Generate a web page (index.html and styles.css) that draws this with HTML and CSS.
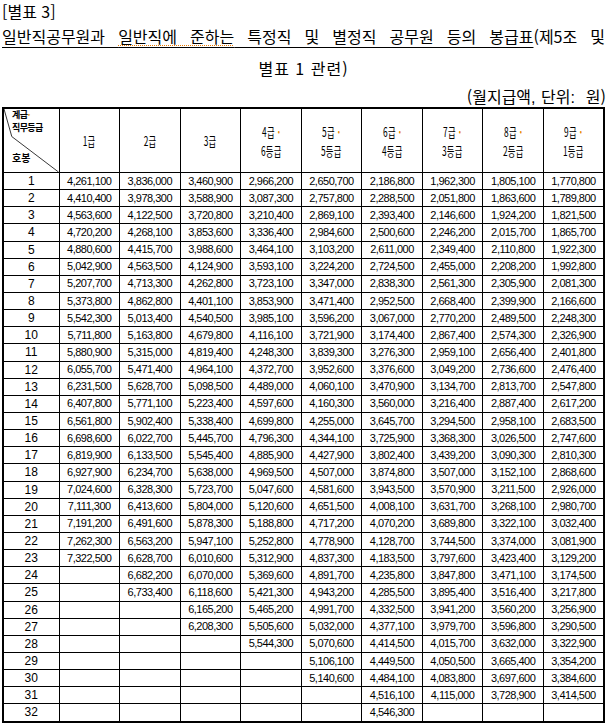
FILE: index.html
```html
<!DOCTYPE html>
<html lang="ko">
<head>
<meta charset="utf-8">
<link rel="stylesheet" href="styles.css">
</head>
<body>
<div class="page">
  <div class="tag">[별표 3]</div>
  <div class="title1"><span class="u">일반직공무원과 <span class="sp">일반직에 준하는</span> 특정직 및 별정직 공무원 등의 봉급표</span>(제5조 및</div>
  <div class="title2">별표 1 관련)</div>
  <div class="unit">(월지급액<span class="pn">,</span> 단위<span class="pn">:</span>&nbsp; 원)</div>
</div>
<table class="pay">
  <colgroup><col class="c0"><col><col><col><col><col><col><col><col><col></colgroup>
  <thead>
    <tr class="head">
      <th class="diag">
        <svg class="diag-line" viewBox="0 0 56 64" preserveAspectRatio="none"><polyline points="0,0 8,28 56,64" fill="none" stroke="#333" stroke-width="1"/></svg>
        <div class="diag-top"><span>계급<span class="dot">·</span></span><span>직무등급</span></div>
        <div class="diag-bot">호봉</div>
      </th>
      <th><span class="h">1급</span></th>
      <th><span class="h">2급</span></th>
      <th><span class="h">3급</span></th>
      <th><span class="h">4급 <span class="dot">·</span><br>6등급</span></th>
      <th><span class="h">5급 <span class="dot">·</span><br>5등급</span></th>
      <th><span class="h">6급 <span class="dot">·</span><br>4등급</span></th>
      <th><span class="h">7급 <span class="dot">·</span><br>3등급</span></th>
      <th><span class="h">8급 <span class="dot">·</span><br>2등급</span></th>
      <th><span class="h">9급 <span class="dot">·</span><br>1등급</span></th>
    </tr>
  </thead>
  <tbody>
    <tr><td>1</td><td>4,261,100</td><td>3,836,000</td><td>3,460,900</td><td>2,966,200</td><td>2,650,700</td><td>2,186,800</td><td>1,962,300</td><td>1,805,100</td><td>1,770,800</td></tr>
    <tr><td>2</td><td>4,410,400</td><td>3,978,300</td><td>3,588,900</td><td>3,087,300</td><td>2,757,800</td><td>2,288,500</td><td>2,051,800</td><td>1,863,600</td><td>1,789,800</td></tr>
    <tr><td>3</td><td>4,563,600</td><td>4,122,500</td><td>3,720,800</td><td>3,210,400</td><td>2,869,100</td><td>2,393,400</td><td>2,146,600</td><td>1,924,200</td><td>1,821,500</td></tr>
    <tr><td>4</td><td>4,720,200</td><td>4,268,100</td><td>3,853,600</td><td>3,336,400</td><td>2,984,600</td><td>2,500,600</td><td>2,246,200</td><td>2,015,700</td><td>1,865,700</td></tr>
    <tr><td>5</td><td>4,880,600</td><td>4,415,700</td><td>3,988,600</td><td>3,464,100</td><td>3,103,200</td><td>2,611,000</td><td>2,349,400</td><td>2,110,800</td><td>1,922,300</td></tr>
    <tr><td>6</td><td>5,042,900</td><td>4,563,500</td><td>4,124,900</td><td>3,593,100</td><td>3,224,200</td><td>2,724,500</td><td>2,455,000</td><td>2,208,200</td><td>1,992,800</td></tr>
    <tr><td>7</td><td>5,207,700</td><td>4,713,300</td><td>4,262,800</td><td>3,723,100</td><td>3,347,000</td><td>2,838,300</td><td>2,561,300</td><td>2,305,900</td><td>2,081,300</td></tr>
    <tr><td>8</td><td>5,373,800</td><td>4,862,800</td><td>4,401,100</td><td>3,853,900</td><td>3,471,400</td><td>2,952,500</td><td>2,668,400</td><td>2,399,900</td><td>2,166,600</td></tr>
    <tr><td>9</td><td>5,542,300</td><td>5,013,400</td><td>4,540,500</td><td>3,985,100</td><td>3,596,200</td><td>3,067,000</td><td>2,770,200</td><td>2,489,500</td><td>2,248,300</td></tr>
    <tr><td>10</td><td>5,711,800</td><td>5,163,800</td><td>4,679,800</td><td>4,116,100</td><td>3,721,900</td><td>3,174,400</td><td>2,867,400</td><td>2,574,300</td><td>2,326,900</td></tr>
    <tr><td>11</td><td>5,880,900</td><td>5,315,000</td><td>4,819,400</td><td>4,248,300</td><td>3,839,300</td><td>3,276,300</td><td>2,959,100</td><td>2,656,400</td><td>2,401,800</td></tr>
    <tr><td>12</td><td>6,055,700</td><td>5,471,400</td><td>4,964,100</td><td>4,372,700</td><td>3,952,600</td><td>3,376,600</td><td>3,049,200</td><td>2,736,600</td><td>2,476,400</td></tr>
    <tr><td>13</td><td>6,231,500</td><td>5,628,700</td><td>5,098,500</td><td>4,489,000</td><td>4,060,100</td><td>3,470,900</td><td>3,134,700</td><td>2,813,700</td><td>2,547,800</td></tr>
    <tr><td>14</td><td>6,407,800</td><td>5,771,100</td><td>5,223,400</td><td>4,597,600</td><td>4,160,300</td><td>3,560,000</td><td>3,216,400</td><td>2,887,400</td><td>2,617,200</td></tr>
    <tr><td>15</td><td>6,561,800</td><td>5,902,400</td><td>5,338,400</td><td>4,699,800</td><td>4,255,000</td><td>3,645,700</td><td>3,294,500</td><td>2,958,100</td><td>2,683,500</td></tr>
    <tr><td>16</td><td>6,698,600</td><td>6,022,700</td><td>5,445,700</td><td>4,796,300</td><td>4,344,100</td><td>3,725,900</td><td>3,368,300</td><td>3,026,500</td><td>2,747,600</td></tr>
    <tr><td>17</td><td>6,819,900</td><td>6,133,500</td><td>5,545,400</td><td>4,885,900</td><td>4,427,900</td><td>3,802,400</td><td>3,439,200</td><td>3,090,300</td><td>2,810,300</td></tr>
    <tr><td>18</td><td>6,927,900</td><td>6,234,700</td><td>5,638,000</td><td>4,969,500</td><td>4,507,000</td><td>3,874,800</td><td>3,507,000</td><td>3,152,100</td><td>2,868,600</td></tr>
    <tr><td>19</td><td>7,024,600</td><td>6,328,300</td><td>5,723,700</td><td>5,047,600</td><td>4,581,600</td><td>3,943,500</td><td>3,570,900</td><td>3,211,500</td><td>2,926,000</td></tr>
    <tr><td>20</td><td>7,111,300</td><td>6,413,600</td><td>5,804,000</td><td>5,120,600</td><td>4,651,500</td><td>4,008,100</td><td>3,631,700</td><td>3,268,100</td><td>2,980,700</td></tr>
    <tr><td>21</td><td>7,191,200</td><td>6,491,600</td><td>5,878,300</td><td>5,188,800</td><td>4,717,200</td><td>4,070,200</td><td>3,689,800</td><td>3,322,100</td><td>3,032,400</td></tr>
    <tr><td>22</td><td>7,262,300</td><td>6,563,200</td><td>5,947,100</td><td>5,252,800</td><td>4,778,900</td><td>4,128,700</td><td>3,744,500</td><td>3,374,000</td><td>3,081,900</td></tr>
    <tr><td>23</td><td>7,322,500</td><td>6,628,700</td><td>6,010,600</td><td>5,312,900</td><td>4,837,300</td><td>4,183,500</td><td>3,797,600</td><td>3,423,400</td><td>3,129,200</td></tr>
    <tr><td>24</td><td></td><td>6,682,200</td><td>6,070,000</td><td>5,369,600</td><td>4,891,700</td><td>4,235,800</td><td>3,847,800</td><td>3,471,100</td><td>3,174,500</td></tr>
    <tr><td>25</td><td></td><td>6,733,400</td><td>6,118,600</td><td>5,421,300</td><td>4,943,200</td><td>4,285,500</td><td>3,895,400</td><td>3,516,400</td><td>3,217,800</td></tr>
    <tr><td>26</td><td></td><td></td><td>6,165,200</td><td>5,465,200</td><td>4,991,700</td><td>4,332,500</td><td>3,941,200</td><td>3,560,200</td><td>3,256,900</td></tr>
    <tr><td>27</td><td></td><td></td><td>6,208,300</td><td>5,505,600</td><td>5,032,000</td><td>4,377,100</td><td>3,979,700</td><td>3,596,800</td><td>3,290,500</td></tr>
    <tr><td>28</td><td></td><td></td><td></td><td>5,544,300</td><td>5,070,600</td><td>4,414,500</td><td>4,015,700</td><td>3,632,000</td><td>3,322,900</td></tr>
    <tr><td>29</td><td></td><td></td><td></td><td></td><td>5,106,100</td><td>4,449,500</td><td>4,050,500</td><td>3,665,400</td><td>3,354,200</td></tr>
    <tr><td>30</td><td></td><td></td><td></td><td></td><td>5,140,600</td><td>4,484,100</td><td>4,083,800</td><td>3,697,600</td><td>3,384,600</td></tr>
    <tr><td>31</td><td></td><td></td><td></td><td></td><td></td><td>4,516,100</td><td>4,115,000</td><td>3,728,900</td><td>3,414,500</td></tr>
    <tr><td>32</td><td></td><td></td><td></td><td></td><td></td><td>4,546,300</td><td></td><td></td><td></td></tr>
  </tbody>
</table>
</body>
</html>
```
FILE: styles.css
```css
html, body {
  margin: 0;
  padding: 0;
  background: #fff;
  color: #000;
}
body {
  width: 607px;
  font-family: "Noto Sans CJK KR", "Noto Sans", sans-serif;
}
.page {
  padding: 0 2px;
}
.tag {
  font-size: 16px;
  line-height: 22px;
  height: 22px;
}
.title1 {
  font-size: 16px;
  line-height: 28px;
  height: 28px;
  text-align: justify;
  text-align-last: justify;
}
.u {
  text-decoration: underline 1px #000;
  text-underline-offset: 4px;
}
.sp {
  text-decoration: underline dotted 1px #e87a00;
  text-underline-offset: 2px;
}
.title2 {
  font-size: 16px;
  line-height: 36px;
  height: 36px;
  text-align: center;
  letter-spacing: 1px;
}
.unit {
  font-size: 16px;
  line-height: 21px;
  height: 21px;
  text-align: right;
  word-spacing: 1px;
  margin-right: -1px;
}
.pn {
  font-family: "Liberation Sans", sans-serif;
}
.pay {
  border-collapse: collapse;
  table-layout: fixed;
  width: 603px;
  margin-left: 2px;
  border: 2px solid #000;
  font-family: "Liberation Sans", Arial, sans-serif;
  font-size: 11px;
}
.pay .c0 {
  width: 56px;
}
.pay th, .pay td {
  border: 1px solid #000;
  padding: 0;
  text-align: center;
  vertical-align: middle;
  font-weight: normal;
  line-height: 1;
}
.pay td {
  height: 16.15px;
  letter-spacing: -0.5px;
}
.pay tbody td:first-child {
  font-size: 12px;
  letter-spacing: 0;
}
.pay tr.head th {
  height: 63px;
}
.h {
  display: inline-block;
  font-family: "Noto Sans CJK KR", sans-serif;
  font-size: 13px;
  line-height: 19px;
  letter-spacing: 0.5px;
  transform: scaleX(0.64);
}
.dot {
  color: #e88a00;
  font-weight: bold;
}
.diag {
  position: relative;
  text-align: left;
}
.diag-line {
  position: absolute;
  left: 0;
  top: 0;
  width: 100%;
  height: 100%;
}
.diag-top {
  position: absolute;
  left: 8px;
  top: -1px;
  display: flex;
  flex-direction: column;
  font-family: "Noto Sans CJK KR", sans-serif;
  font-size: 9px;
  line-height: 13px;
  font-weight: bold;
  letter-spacing: -0.6px;
  text-align: left;
}
.diag-bot {
  position: absolute;
  left: 8px;
  bottom: 7px;
  font-family: "Noto Sans CJK KR", sans-serif;
  font-size: 10px;
  line-height: 14px;
  font-weight: bold;
}
```
